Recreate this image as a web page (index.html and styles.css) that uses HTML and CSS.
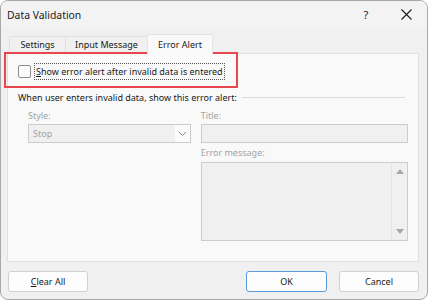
FILE: index.html
```html
<!DOCTYPE html>
<html>
<head>
<meta charset="utf-8">
<link rel="stylesheet" href="styles.css">
</head>
<body>
<div class="dialog">
  <div class="titlebar">
    <span class="title">Data Validation</span>
    <span class="help">?</span>
    <span class="close"><svg width="11" height="11" viewBox="0 0 11 11"><path d="M0.5 0.5L10.5 10.5M10.5 0.5L0.5 10.5" stroke="#1a1a1a" stroke-width="1.1" fill="none"/></svg></span>
  </div>
  <div class="tabs">
    <div class="tab tab-settings">Settings</div>
    <div class="tab tab-input">Input Message</div>
    <div class="tab tab-error active">Error Alert</div>
  </div>
  <div class="panel">
    <div class="check-row">
      <span class="checkbox"></span>
      <span class="check-label"><u>S</u>how error alert after invalid data is entered</span>
    </div>
    <div class="group-head">
      <span>When user enters invalid data, show this error alert:</span>
      <span class="sep"></span>
    </div>
    <div class="fields">
      <div class="col-left">
        <div class="lbl">Style:</div>
        <div class="combo">
          <span class="combo-text">Stop</span>
          <span class="combo-btn"><svg width="9" height="6" viewBox="0 0 9 6"><path d="M1 1L4.5 4.5L8 1" stroke="#8a8a8a" stroke-width="1" fill="none"/></svg></span>
        </div>
      </div>
      <div class="col-right">
        <div class="lbl">Title:</div>
        <div class="input"></div>
        <div class="lbl lbl2">Error message:</div>
        <div class="textarea">
          <div class="ta-body"></div>
          <div class="scroll">
            <span class="arrow up"></span>
            <span class="arrow down"></span>
          </div>
        </div>
      </div>
    </div>
  </div>
  <div class="buttons">
    <div class="btn"><u>C</u>lear All</div>
    <div class="spacer"></div>
    <div class="btn primary">OK</div>
    <div class="btn">Cancel</div>
  </div>
  <div class="highlight"></div>
</div>
</body>
</html>
```

FILE: styles.css
```css
html, body {
  margin: 0;
  padding: 0;
  background: #ffffff;
}
body {
  font-family: "Noto Sans", "Open Sans", sans-serif;
  font-size: 9px;
  color: #1a1a1a;
}
.dialog {
  position: relative;
  width: 428px;
  height: 300px;
  box-sizing: border-box;
  border: 1px solid #a8a8a8;
  border-radius: 8px;
  background: #f0f0f0;
  overflow: hidden;
}
.titlebar {
  height: 27px;
  display: flex;
  align-items: center;
  padding-left: 6px;
  background: #f3f3f3;
}
.title {
  font-size: 10.4px;
  flex: 1;
  padding-top: 1px;
}
.help {
  font-size: 11px;
  width: 12px;
  margin-right: 29px;
  text-align: center;
}
.close {
  display: flex;
  margin-right: 15px;
}
.tabs {
  display: flex;
  align-items: flex-end;
  height: 25px;
  padding-left: 8px;
}
.tab {
  height: 16px;
  line-height: 16px;
  border: 1px solid #e0e0e0;
  border-bottom: none;
  background: #f0f0f0;
  text-align: center;
  margin-right: -1px;
  box-sizing: content-box;
}
.tab-settings {
  width: 55px;
}
.tab-input {
  width: 81px;
}
.tab-error {
  width: 64px;
}
.tab.active {
  height: 19px;
  line-height: 19px;
  background: #f9f9f9;
  border-color: #e4e4e4;
  position: relative;
  z-index: 1;
  margin-bottom: -1px;
}
.panel {
  margin-left: 6px;
  width: 412px;
  height: 209px;
  box-sizing: border-box;
  border: 1px solid #e0e0e0;
  background: #f9f9f9;
  padding: 9px 10px 0 10px;
}
.check-row {
  display: flex;
  align-items: center;
  height: 17px;
}
.checkbox {
  width: 11px;
  height: 11px;
  border: 1px solid #8c8c8c;
  border-radius: 2px;
  background: #fbfbfb;
  margin-right: 3px;
}
.check-label {
  border: 1px dotted #555;
  padding: 0 1px;
  height: 15px;
  line-height: 15px;
}
.group-head {
  display: flex;
  align-items: center;
  height: 14px;
  margin-top: 10px;
}
.sep {
  flex: 1;
  height: 1px;
  background: #dcdcdc;
  margin-left: 5px;
  margin-right: 3px;
}
.fields {
  display: flex;
  margin-top: 5px;
  padding-left: 10px;
  gap: 10px;
}
.col-left {
  width: 164px;
}
.col-right {
  width: 209px;
}
.lbl {
  color: #a3a3a3;
  height: 14px;
  line-height: 14px;
  margin-bottom: 1px;
}
.lbl2 {
  margin-top: 3px;
  margin-bottom: 2px;
}
.combo {
  display: flex;
  height: 19px;
  box-sizing: border-box;
  border: 1px solid #cccccc;
  background: #f0f0f0;
}
.combo-text {
  flex: 1;
  color: #a3a3a3;
  line-height: 17px;
  padding-left: 4px;
}
.combo-btn {
  width: 15px;
  background: #fbfbfb;
  display: flex;
  align-items: center;
  justify-content: center;
}
.input {
  height: 19px;
  box-sizing: border-box;
  border: 1px solid #cccccc;
  background: #f0f0f0;
}
.textarea {
  display: flex;
  height: 79px;
  box-sizing: border-box;
  border: 1px solid #cccccc;
  background: #f0f0f0;
}
.ta-body {
  flex: 1;
}
.scroll {
  width: 15px;
  border-left: 1px solid #e6e6e6;
  display: flex;
  flex-direction: column;
  justify-content: space-between;
  align-items: center;
  padding: 6px 0 6px 0;
}
.arrow {
  width: 0;
  height: 0;
  border-left: 4px solid transparent;
  border-right: 4px solid transparent;
}
.arrow.up {
  border-bottom: 5px solid #a8a8a8;
}
.arrow.down {
  border-top: 5px solid #a8a8a8;
}
.buttons {
  display: flex;
  padding: 9px 8px 0 7px;
  gap: 12px;
}
.spacer {
  flex: 1;
}
.btn {
  width: 80px;
  height: 21px;
  box-sizing: border-box;
  border: 1px solid #d0d0d0;
  border-radius: 3px;
  background: #fdfdfd;
  text-align: center;
  line-height: 19px;
}
.btn.primary {
  border: 1px solid #5a9ad8;
  width: 81px;
}
.highlight {
  position: absolute;
  left: 3px;
  top: 51px;
  width: 234px;
  height: 36px;
  box-sizing: border-box;
  border: 2px solid #e8474d;
  pointer-events: none;
}
```
